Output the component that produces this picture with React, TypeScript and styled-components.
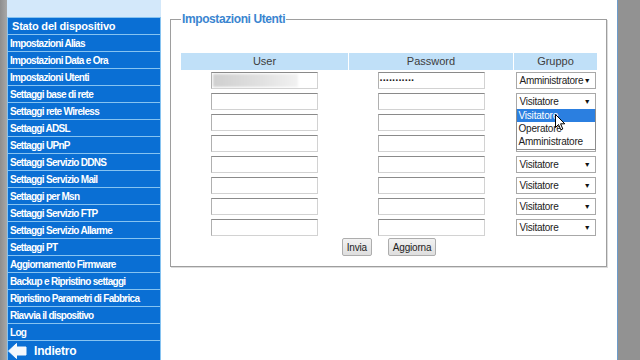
import React from 'react';
import styled, { createGlobalStyle } from 'styled-components';

const GlobalStyle = createGlobalStyle`
  html, body {
    margin: 0;
    padding: 0;
    overflow: hidden;
    background: #ffffff;
    font-family: "Liberation Sans", Arial, sans-serif;
  }
`;

const Page = styled.div`
  width: 640px;
  height: 360px;
  display: flex;
  flex-direction: row;
  overflow: hidden;
`;

const EdgeStrip = styled.div`
  width: 7px;
  flex-shrink: 0;
  background: linear-gradient(to right, #8e8e8e, #a8a8a8);
`;

const RightStrip = styled.div`
  width: 23px;
  flex-shrink: 0;
  background: #929292;
  border-left: 1px solid #6d9ccb;
`;

const Sidebar = styled.nav`
  width: 152px;
  flex-shrink: 0;
  display: flex;
  flex-direction: column;
  gap: 1px;
  padding: 0 1px;
  background: #86c3f1;
`;

const SidebarTop = styled.div`
  height: 17px;
  margin: 0 -1px;
  background: #d3e8fa;
`;

const MenuItem = styled.div<{ $main?: boolean }>`
  height: 16px;
  line-height: 17px;
  background: #0a6fd4;
  color: #ffffff;
  font-weight: bold;
  font-size: ${(p) => (p.$main ? '11px' : '10px')};
  letter-spacing: ${(p) => (p.$main ? '-0.2px' : '-0.7px')};
  padding-left: ${(p) => (p.$main ? '4px' : '2px')};
  white-space: nowrap;
  overflow: hidden;
`;

const BackItem = styled.div`
  flex: 1;
  display: flex;
  align-items: center;
  gap: 7px;
  background: #0a6fd4;
  color: #ffffff;
  font-weight: bold;
  font-size: 12px;
  letter-spacing: -0.2px;
`;

const Main = styled.main`
  flex: 1;
  padding: 12px 10px 0 9px;
  background: #ffffff;
`;

const Fieldset = styled.fieldset`
  margin: 0;
  padding: 27px 9px 10px 10px;
  border: 1px solid #9e9e9e;
  box-shadow: 1px 1px 0 #dcdcdc;
`;

const Legend = styled.legend`
  margin-left: 0;
  padding: 0 1px;
  font-size: 12px;
  line-height: 14px;
  font-weight: bold;
  letter-spacing: -0.4px;
  color: #3a85d0;
`;

const Columns = '167px 164px 83px';

const HeaderRow = styled.div`
  display: grid;
  grid-template-columns: ${Columns};
  column-gap: 1px;
  height: 17px;
`;

const HeaderCell = styled.div`
  background: #c0e0f8;
  color: #3d3d3d;
  font-size: 11px;
  line-height: 17px;
  text-align: center;
`;

const Row = styled.div`
  display: grid;
  grid-template-columns: ${Columns};
  column-gap: 1px;
  height: 21px;
  align-items: center;
  justify-items: center;
`;

const TextBox = styled.div`
  position: relative;
  box-sizing: border-box;
  width: 107px;
  height: 17px;
  background: #ffffff;
  border: 1px solid #d2d2d2;
  border-top-color: #8a8a8a;
  border-left-color: #b0b0b0;
  font-size: 11px;
  line-height: 14px;
  padding-left: 1px;
  overflow: hidden;
`;

const Smudge = styled.div`
  position: absolute;
  left: 1px;
  top: 1px;
  width: 85px;
  height: 13px;
  background: linear-gradient(to right, #cfcfcf, #e2e2e2 60%, #f2f2f2);
  filter: blur(1px);
`;

const Dots = styled.span`
  font-weight: bold;
  letter-spacing: 0.1px;
  color: #222;
  position: relative;
  top: -3px;
`;

const SelectCell = styled.div`
  position: relative;
  width: 80px;
  height: 17px;
`;

const SelectBox = styled.div`
  box-sizing: border-box;
  width: 80px;
  height: 17px;
  display: flex;
  align-items: center;
  justify-content: space-between;
  padding: 0 4px 0 3px;
  background: #ffffff;
  border: 1px solid #a8a8a8;
  font-size: 10px;
  letter-spacing: -0.25px;
  color: #222;
  white-space: nowrap;
`;

const Caret = styled.span`
  font-size: 7px;
  color: #111;
`;

const DropList = styled.ul`
  position: absolute;
  top: 16px;
  left: 0;
  z-index: 5;
  box-sizing: border-box;
  width: 80px;
  margin: 0;
  padding: 0 0 1px;
  list-style: none;
  background: #ffffff;
  border: 1px solid #8d8d8d;
  border-top: none;
`;

const DropOption = styled.li<{ $active?: boolean }>`
  height: 13px;
  line-height: 13px;
  padding-left: 2px;
  font-size: 10px;
  letter-spacing: -0.2px;
  background: ${(p) => (p.$active ? '#2b7fe0' : '#ffffff')};
  color: ${(p) => (p.$active ? '#ffffff' : '#222222')};
`;

const Pointer = styled.svg`
  position: absolute;
  left: 38px;
  top: 5px;
  z-index: 6;
`;

const Actions = styled.div`
  display: flex;
  justify-content: center;
  gap: 16px;
`;

const Button = styled.button`
  height: 18px;
  padding: 0 4px;
  border: 1px solid #adadad;
  border-radius: 2px;
  background: linear-gradient(#f2f2f2, #dedede);
  font-family: "Liberation Sans", Arial, sans-serif;
  font-size: 10px;
  letter-spacing: -0.2px;
  color: #222;
`;

const menu = [
  'Impostazioni Alias',
  'Impostazioni Data e Ora',
  'Impostazioni Utenti',
  'Settaggi base di rete',
  'Settaggi rete Wireless',
  'Settaggi ADSL',
  'Settaggi UPnP',
  'Settaggi Servizio DDNS',
  'Settaggi Servizio Mail',
  'Settaggi per Msn',
  'Settaggi Servizio FTP',
  'Settaggi Servizio Allarme',
  'Settaggi PT',
  'Aggiornamento Firmware',
  'Backup e Ripristino settaggi',
  'Ripristino Parametri di Fabbrica',
  'Riavvia il dispositivo',
  'Log',
];

// rows 3 and 4 sit under the open list, so their label is not drawn
const groups = [
  'Amministratore',
  'Visitatore',
  '',
  '',
  'Visitatore',
  'Visitatore',
  'Visitatore',
  'Visitatore',
];

const BackArrow = () => (
  <svg width="19" height="16" viewBox="0 0 19 16">
    <polygon
      points="0.5,8 8.5,0.5 8.5,4 18,4 18,12 8.5,12 8.5,15.5"
      fill="#f4f8fc"
      stroke="#f4f8fc"
      strokeWidth="1"
      strokeLinejoin="round"
    />
  </svg>
);

export default function App() {
  return (
    <>
      <GlobalStyle />
      <Page>
        <EdgeStrip />
        <Sidebar>
          <SidebarTop />
          <MenuItem $main>Stato del dispositivo</MenuItem>
          {menu.map((m) => (
            <MenuItem key={m}>{m}</MenuItem>
          ))}
          <BackItem>
            <BackArrow />
            Indietro
          </BackItem>
        </Sidebar>
        <Main>
          <Fieldset>
            <Legend>Impostazioni Utenti</Legend>
            <HeaderRow>
              <HeaderCell>User</HeaderCell>
              <HeaderCell>Password</HeaderCell>
              <HeaderCell>Gruppo</HeaderCell>
            </HeaderRow>
            {groups.map((g, i) => (
              <Row key={i}>
                <TextBox>{i === 0 && <Smudge />}</TextBox>
                <TextBox>{i === 0 && <Dots>...........</Dots>}</TextBox>
                <SelectCell>
                  <SelectBox>
                    {g}
                    {g && <Caret>▼</Caret>}
                  </SelectBox>
                  {i === 1 && (
                    <DropList>
                      <DropOption $active>Visitatore</DropOption>
                      <DropOption>Operatore</DropOption>
                      <DropOption>Amministratore</DropOption>
                      <Pointer width="11" height="17" viewBox="0 0 11 17">
                        <path
                          d="M0.5 0.5 L0.5 13.5 L3.5 10.5 L5.8 15.8 L7.8 15 L5.6 9.8 L9.8 9.8 Z"
                          fill="#ffffff"
                          stroke="#000000"
                          strokeWidth="1"
                          strokeLinejoin="round"
                        />
                      </Pointer>
                    </DropList>
                  )}
                </SelectCell>
              </Row>
            ))}
            <Actions>
              <Button>Invia</Button>
              <Button>Aggiorna</Button>
            </Actions>
          </Fieldset>
        </Main>
        <RightStrip />
      </Page>
    </>
  );
}
